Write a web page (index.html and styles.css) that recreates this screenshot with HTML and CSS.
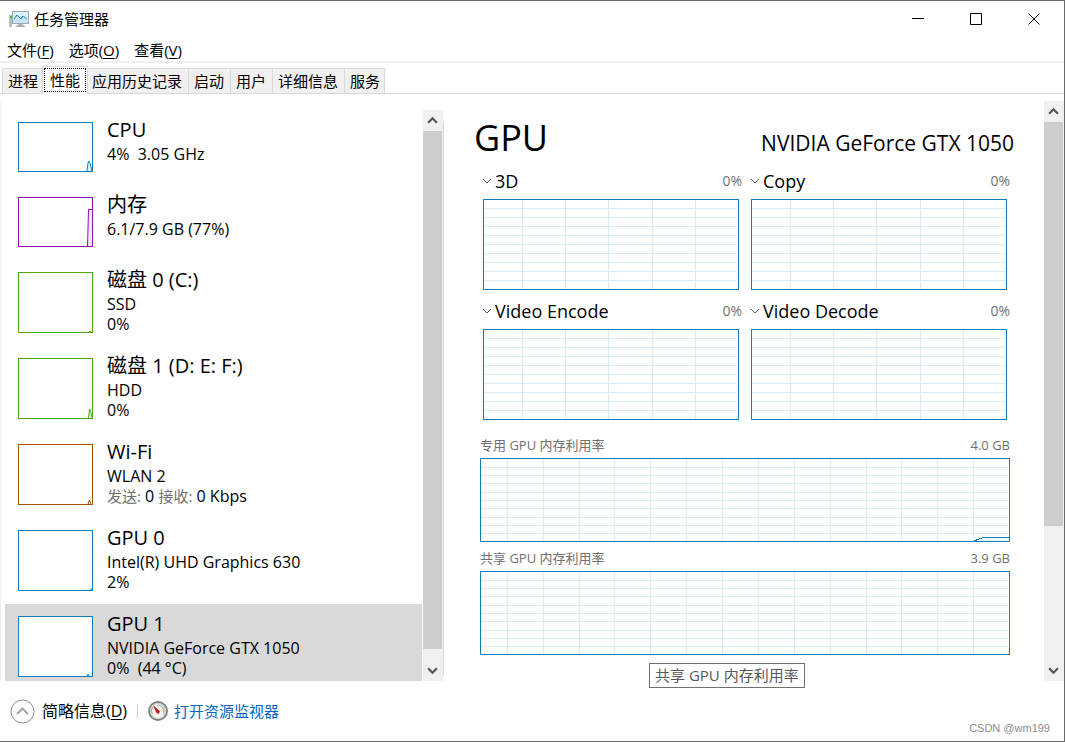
FILE: index.html
```
<!DOCTYPE html>
<html lang="zh-CN">
<head>
  <meta charset="UTF-8" />
  <meta name="viewport" content="width=device-width, initial-scale=1.0"/>
  <title>任务管理器</title>
  <link rel="stylesheet" href="styles.css">
</head>
<body>
<!-- shared shapes -->
<svg class="defs" aria-hidden="true">
  <symbol id="grid-small" viewBox="0 0 254 89" preserveAspectRatio="none">
    <path d="M0 8.5H253M0 17.5H253M0 26.5H253M0 35.5H253M0 44.5H253M0 53.5H253M0 62.5H253M0 71.5H253M0 80.5H253M38.5 0V89M81.5 0V89M124.5 0V89M168.5 0V89M211.5 0V89"/>
  </symbol>
  <symbol id="grid-wide" viewBox="0 0 528 82" preserveAspectRatio="none">
    <path d="M0 8.5H527M0 16.5H527M0 24.5H527M0 33.5H527M0 41.5H527M0 49.5H527M0 58.5H527M0 66.5H527M0 74.5H527M26.5 0V82M62.5 0V82M98.5 0V82M133.5 0V82M169.5 0V82M205.5 0V82M241.5 0V82M277.5 0V82M313.5 0V82M349.5 0V82M385.5 0V82M420.5 0V82M456.5 0V82M492.5 0V82"/>
  </symbol>
  <symbol id="arrow-up" viewBox="0 0 10 8"><path d="M1 6l4-4 4 4"/></symbol>
  <symbol id="arrow-down" viewBox="0 0 10 8"><path d="M1 2l4 4 4-4"/></symbol>
</svg>

<div class="window">
  <header class="titlebar">
    <svg class="app-icon" width="20" height="18" viewBox="0 0 20 18">
      <rect x="0" y="5" width="3" height="12" fill="#b9bcbe"/>
      <rect x="1" y="6" width="2" height="2" fill="#35c435"/>
      <rect x="3" y="1" width="17" height="13" fill="#a3a7aa"/>
      <rect x="4" y="2" width="15" height="11" fill="#d9f1fc"/>
      <path d="M4 9l4-4 3 3 3-2 5 4v3H4z" fill="#c3e7f8"/>
      <path d="M5 9l3-4 4 4 2-3 4 3" fill="none" stroke="#1b87b8"/>
      <path d="M10 14h3l4 3H6z" fill="#aeb1b3"/>
    </svg>
    <h1>任务管理器</h1>
    <div class="window-controls">
      <button aria-label="最小化"><svg width="12" height="12"><path d="M0 5.5h12"/></svg></button>
      <button aria-label="最大化"><svg width="12" height="12"><path d="M.5.5h11v11H.5z"/></svg></button>
      <button aria-label="关闭"><svg width="12" height="12"><path d="M.5.5l11 11M11.5.5l-11 11"/></svg></button>
    </div>
  </header>

  <nav class="menu">
    <button>文件(<u>F</u>)</button>
    <button>选项(<u>O</u>)</button>
    <button>查看(<u>V</u>)</button>
  </nav>

  <div class="tabs" role="tablist">
    <button role="tab">进程</button>
    <button role="tab" class="active" aria-selected="true"><span>性能</span></button>
    <button role="tab">应用历史记录</button>
    <button role="tab">启动</button>
    <button role="tab">用户</button>
    <button role="tab">详细信息</button>
    <button role="tab">服务</button>
  </div>

  <main>
    <section class="sidebar">
      <div class="devices">
        <button class="device">
          <svg class="thumb short blue" viewBox="1 1 73 48"><path d="M69 49l1-8 1-2 1 2 2 8"/></svg>
          <span class="info"><b>CPU</b><span>4%&nbsp; 3.05 GHz</span></span>
        </button>
        <button class="device">
          <svg class="thumb short purple" viewBox="1 1 73 48"><path d="M69.5 50l1-37.5H75V50z"/></svg>
          <span class="info"><b>内存</b><span>6.1/7.9 GB (77%)</span></span>
        </button>
        <button class="device">
          <svg class="thumb green" viewBox="1 1 73 59"><path d="M71 59.5h2"/></svg>
          <span class="info"><b>磁盘 0 (C:)</b><span>SSD</span><span>0%</span></span>
        </button>
        <button class="device">
          <svg class="thumb green" viewBox="1 1 73 59"><path d="M70.5 60l1-9 1 2 1 5 1 2"/></svg>
          <span class="info"><b>磁盘 1 (D: E: F:)</b><span>HDD</span><span>0%</span></span>
        </button>
        <button class="device">
          <svg class="thumb brown" viewBox="1 1 73 59"><path d="M70 60l1.5-4 1.5 4"/></svg>
          <span class="info"><b>Wi-Fi</b><span>WLAN 2</span><span><em>发送:</em> 0 <em>接收:</em> 0 Kbps</span></span>
        </button>
        <button class="device">
          <svg class="thumb blue" viewBox="1 1 73 59"><path d="M72 60l2-1"/></svg>
          <span class="info"><b>GPU 0</b><span>Intel(R) UHD Graphics 630</span><span>2%</span></span>
        </button>
        <button class="device selected">
          <svg class="thumb blue" viewBox="1 1 73 59"><path d="M69 60l1-2 1 2"/></svg>
          <span class="info"><b>GPU 1</b><span>NVIDIA GeForce GTX 1050</span><span>0%&nbsp; (44 °C)</span></span>
        </button>
      </div>
      <div class="scrollbar">
        <button aria-label="向上滚动"><svg><use href="#arrow-up"/></svg></button>
        <div class="track"><div class="thumb-bar full"></div></div>
        <button aria-label="向下滚动"><svg><use href="#arrow-down"/></svg></button>
      </div>
      <div class="divider"></div>
    </section>

    <section class="detail">
      <div class="detail-head">
        <h2>GPU</h2>
        <p>NVIDIA GeForce GTX 1050</p>
      </div>

      <div class="engines">
        <div class="engine">
          <div class="engine-head"><button><svg><use href="#arrow-down"/></svg>3D</button><span>0%</span></div>
          <svg class="chart"><use href="#grid-small"/></svg>
        </div>
        <div class="engine">
          <div class="engine-head"><button><svg><use href="#arrow-down"/></svg>Copy</button><span>0%</span></div>
          <svg class="chart"><use href="#grid-small"/></svg>
        </div>
        <div class="engine">
          <div class="engine-head"><button><svg><use href="#arrow-down"/></svg>Video Encode</button><span>0%</span></div>
          <svg class="chart"><use href="#grid-small"/></svg>
        </div>
        <div class="engine">
          <div class="engine-head"><button><svg><use href="#arrow-down"/></svg>Video Decode</button><span>0%</span></div>
          <svg class="chart"><use href="#grid-small"/></svg>
        </div>
      </div>

      <div class="memory">
        <div class="memory-head"><span>专用 GPU 内存利用率</span><span>4.0 GB</span></div>
        <svg class="chart wide" viewBox="0 0 528 82" preserveAspectRatio="none">
          <use href="#grid-wide"/>
          <path class="usage" d="M493 82l9-3.5h27V83z"/>
        </svg>
      </div>
      <div class="memory">
        <div class="memory-head"><span>共享 GPU 内存利用率</span><span>3.9 GB</span></div>
        <svg class="chart wide" viewBox="0 0 528 82" preserveAspectRatio="none"><use href="#grid-wide"/></svg>
        <div class="tooltip" role="tooltip">共享 GPU 内存利用率</div>
      </div>
    </section>

    <div class="scrollbar outer">
      <button aria-label="向上滚动"><svg><use href="#arrow-up"/></svg></button>
      <div class="track"><div class="thumb-bar"></div></div>
      <button aria-label="向下滚动"><svg><use href="#arrow-down"/></svg></button>
    </div>
  </main>

  <footer>
    <button class="fewer">
      <svg width="25" height="25" viewBox="0 0 25 25" fill="none">
        <circle cx="12.5" cy="12.5" r="11.5" stroke="#8c8c8c"/>
        <path d="M7 15l5.5-5.5L18 15" stroke="#a0a0a0" stroke-width="1.8"/>
      </svg>
      <span>简略信息(<u>D</u>)</span>
    </button>
    <a class="monitor" href="#">
      <svg width="20" height="20" viewBox="0 0 20 20" fill="none">
        <circle cx="10" cy="10" r="9" fill="#f4f3f0" stroke="#7d8484" stroke-width="2"/>
        <circle cx="10" cy="10" r="7.5" stroke="#c9cdcb"/>
        <path d="M4.5 13a6 6 0 0 1 1-7.5M9 4.2a6 6 0 0 1 6.5 8.3" stroke="#a9aaa6"/>
        <path d="M14 6.5a6 6 0 0 1 1.5 5" stroke="#e99a6a"/>
        <path d="M5 4l7 6.5-1.5 2.5L8.5 12z" fill="#d3141c"/>
      </svg>
      <span>打开资源监视器</span>
    </a>
    <span class="watermark">CSDN @wm199</span>
  </footer>
</div>
</body>
</html>
```
FILE: styles.css
```
* {
  box-sizing: border-box;
}

body {
  margin: 0;
  font-family: "Open Sans", "Noto Sans CJK SC", sans-serif;
  font-size: 15px;
  line-height: 20px;
  color: #000;
  background: #fff;
}
button {
  margin: 0;
  padding: 0;
  border: none;
  background: none;
  font: inherit;
  color: inherit;
  text-align: left;
}
h1, h2, p {
  margin: 0;
  font-weight: 400;
}
u {
  text-underline-offset: 2px;
}
.defs {
  position: absolute;
  width: 0;
  height: 0;
}
.window {
  min-height: 100vh;
  display: flex;
  flex-direction: column;
  border: 1px solid #6b696b;
  border-left: none;
}

/* title bar and menu */
.titlebar {
  display: flex;
  align-items: center;
  height: 36px;
  padding-left: 9px;
}
.titlebar h1 {
  flex: 1;
  margin-left: 5px;
  font-size: 15px;
}
.window-controls {
  display: flex;
  height: 100%;
  padding-right: 1px;
}
.window-controls button {
  width: 58px;
  display: flex;
  align-items: center;
  justify-content: center;
}
.window-controls path {
  fill: none;
  stroke: #000;
}
.menu {
  display: flex;
  gap: 15px;
  height: 26px;
  padding: 1px 0 0 7px;
  border-bottom: 2px solid #f0f0f0;
}

/* tabs */
.tabs {
  display: flex;
  align-items: flex-end;
  height: 31px;
  padding-left: 2px;
  border-bottom: 1px solid #d9d9d9;
}
.tabs button {
  height: 25px;
  padding: 0 6px 0 5px;
  border: 1px solid #d9d9d9;
  border-width: 1px 0 0 1px;
  background: #f0f0f0;
}
.tabs button:last-child {
  padding-right: 4px;
  border-right-width: 1px;
}
.tabs .active {
  position: relative;
  height: 28px;
  margin: 0 -2px -1px;
  padding: 0 1px 2px;
  border-right-width: 1px;
  background: #fff;
}
.active span {
  display: block;
  padding: 0 5px;
  line-height: 22px;
  border: 1px dotted #000;
}

main {
  flex: 1;
  display: flex;
  padding-top: 7px;
}

/* device list */
.sidebar {
  flex: 0 0 444px;
  display: flex;
  padding: 9px 0 0 4px;
  border-left: 1px solid #f0f0f0;
}
.devices {
  flex: 1;
  height: 571px;
  margin-right: 1px;
  overflow: hidden;
}
.device {
  display: flex;
  gap: 14px;
  width: 100%;
  padding: 6px 13px 0;
}
.device.selected {
  background: #d9d9d9;
}
.divider {
  width: 1px;
  margin: 12px 0 5px;
  background: #d9d9d9;
}
.thumb {
  flex: none;
  width: 75px;
  height: 61px;
  margin: 6px 0 13px;
  border: 1px solid currentColor;
  background: #fff;
}
.thumb.short {
  height: 50px;
}
.thumb path {
  fill: currentColor;
  fill-opacity: 0.1;
  stroke: currentColor;
}
.blue {
  color: #117dbb;
}
.purple {
  color: #8b12ae;
}
.green {
  color: #4da60c;
}
.brown {
  color: #a74f01;
}
.info > * {
  display: block;
  white-space: nowrap;
}
.info > span {
  font-size: 16px;
}
.info b {
  font-size: 20px;
  font-weight: 400;
  line-height: 28px;
}
.info em {
  font-size: 15px;
  font-style: normal;
  color: #707070;
}

/* scrollbars */
.scrollbar {
  flex: none;
  width: 20px;
  display: flex;
  flex-direction: column;
  background: #f0f0f0;
}
.scrollbar button {
  display: flex;
  align-items: center;
  justify-content: center;
  height: 21px;
  padding-right: 1px;
}
.scrollbar svg {
  width: 11px;
  height: 9px;
  fill: none;
  stroke: #555;
  stroke-width: 2;
}
.track {
  flex: 1;
  padding-right: 1px;
}
.thumb-bar {
  height: 75%;
  background: #cdcdcd;
}
.thumb-bar.full {
  height: 98%;
}

/* detail pane */
.detail {
  flex: 1;
  min-width: 0;
  padding: 9px 34px 0 36px;
}
.detail-head {
  display: flex;
  justify-content: space-between;
  align-items: baseline;
  margin: 0 -4px 0 -6px;
}
.detail-head h2 {
  font-size: 36px;
  line-height: 56px;
}
.detail-head p {
  font-size: 21px;
}
.engines {
  display: grid;
  grid-template-columns: 1fr 1fr;
  gap: 6px 12px;
  padding: 0 3px;
}
.engine-head {
  display: flex;
  justify-content: space-between;
  align-items: center;
  height: 30px;
  margin: 0 -3px 3px -1px;
}
.engine-head button {
  display: flex;
  align-items: center;
  gap: 3px;
  font-size: 18px;
}
.engine-head svg {
  width: 10px;
  height: 8px;
  fill: none;
  stroke: #555;
}
.engine-head span {
  font-size: 14px;
  color: #707070;
}
.chart {
  display: block;
  width: 100%;
  height: 91px;
  border: 1px solid #117dbb;
  fill: none;
  stroke: #d9eaf4;
  shape-rendering: crispEdges;
}
.chart.wide {
  height: 84px;
}
.usage {
  fill: #f1f6fa;
  stroke: #117dbb;
}
.memory {
  position: relative;
  margin-top: 3px;
}
.engines + .memory {
  margin-top: 12px;
}
.memory-head {
  display: flex;
  justify-content: space-between;
  font-size: 13px;
  line-height: 26px;
  color: #707070;
}
.tooltip {
  position: absolute;
  top: 118px;
  left: 169px;
  padding: 0 5px;
  border: 1px solid #707070;
  line-height: 23px;
  color: #575757;
  background: #fff;
  white-space: nowrap;
}

/* footer */
footer {
  position: relative;
  display: flex;
  align-items: center;
  height: 60px;
  padding-left: 10px;
}
.fewer {
  display: flex;
  align-items: center;
  gap: 7px;
  padding-right: 10px;
  font-size: 16px;
}
.monitor {
  display: flex;
  align-items: center;
  gap: 6px;
  color: #0066cc;
  text-decoration: none;
}
.monitor::before {
  content: "";
  width: 1px;
  height: 14px;
  margin-right: 4px;
  background: #d0d0d0;
}
.watermark {
  position: absolute;
  right: 14px;
  bottom: 3px;
  font-family: "Liberation Sans", sans-serif;
  font-size: 11px;
  color: #8a8a8a;
}
```
